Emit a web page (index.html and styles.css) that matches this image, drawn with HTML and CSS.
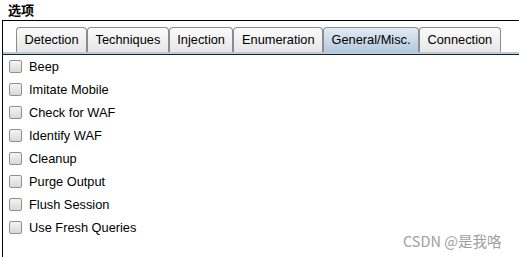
FILE: index.html
```html
<!DOCTYPE html>
<html lang="zh">
<head>
    <meta charset="UTF-8">
    <title>选项</title>
    <link rel="stylesheet" href="styles.css">
</head>
<body>
    <div class="title">选项</div>
    <div class="panel">
        <div class="tabs">
            <div class="tab">Detection</div>
            <div class="tab">Techniques</div>
            <div class="tab">Injection</div>
            <div class="tab">Enumeration</div>
            <div class="tab active">General/Misc.</div>
            <div class="tab">Connection</div>
        </div>
        <div class="strip"></div>
        <div class="options">
            <label class="opt"><span class="box"></span>Beep</label>
            <label class="opt"><span class="box"></span>Imitate Mobile</label>
            <label class="opt"><span class="box"></span>Check for WAF</label>
            <label class="opt"><span class="box"></span>Identify WAF</label>
            <label class="opt"><span class="box"></span>Cleanup</label>
            <label class="opt"><span class="box"></span>Purge Output</label>
            <label class="opt"><span class="box"></span>Flush Session</label>
            <label class="opt"><span class="box"></span>Use Fresh Queries</label>
        </div>
    </div>
    <div class="watermark">CSDN @是我咯</div>
</body>
</html>
```

FILE: styles.css
```css
body {
    margin: 0;
    background: #fff;
    font-family: "Liberation Sans", Arial, "Noto Sans CJK SC", sans-serif;
    font-size: 12px;
    color: #000;
    overflow: hidden;
    width: 519px;
    height: 257px;
    position: relative;
}

.title {
    height: 20px;
    padding-left: 8px;
    font-weight: bold;
    font-size: 13px;
    line-height: 20px;
    font-family: "Noto Sans CJK SC", sans-serif;
}

.panel {
    margin-left: 2px;
    height: 236px;
    border-top: 1px solid #000;
    border-left: 1px solid #000;
}

.tabs {
    display: flex;
    padding: 6px 0 0 13px;
    height: 25px;
}

.tab {
    box-sizing: border-box;
    height: 25px;
    padding: 0 7.5px;
    line-height: 24px;
    font-size: 12.8px;
    border: 1px solid #8c8c8c;
    border-bottom: none;
    border-radius: 4px 4px 0 0;
    background: linear-gradient(#fbfbfb, #e6e6e6);
    color: #000;
}

.tab.active {
    background: linear-gradient(#e3ebf3, #b4c8dc);
}

.strip {
    height: 2px;
    background: #b8cbde;
    border-bottom: 1px solid #222;
}

.options {
    padding: 0 0 0 6px;
}

.opt {
    display: flex;
    align-items: center;
    height: 23px;
    font-size: 12.8px;
}

.box {
    box-sizing: border-box;
    width: 13px;
    height: 13px;
    margin-right: 7px;
    border: 1px solid #8f8f8f;
    border-radius: 2px;
    background: linear-gradient(#f4f4f4, #d9d9d9);
}

.watermark {
    position: absolute;
    left: 403px;
    top: 230px;
    font-family: "Noto Sans CJK SC", sans-serif;
    font-size: 14.5px;
    color: #a0a0a0;
}
```
